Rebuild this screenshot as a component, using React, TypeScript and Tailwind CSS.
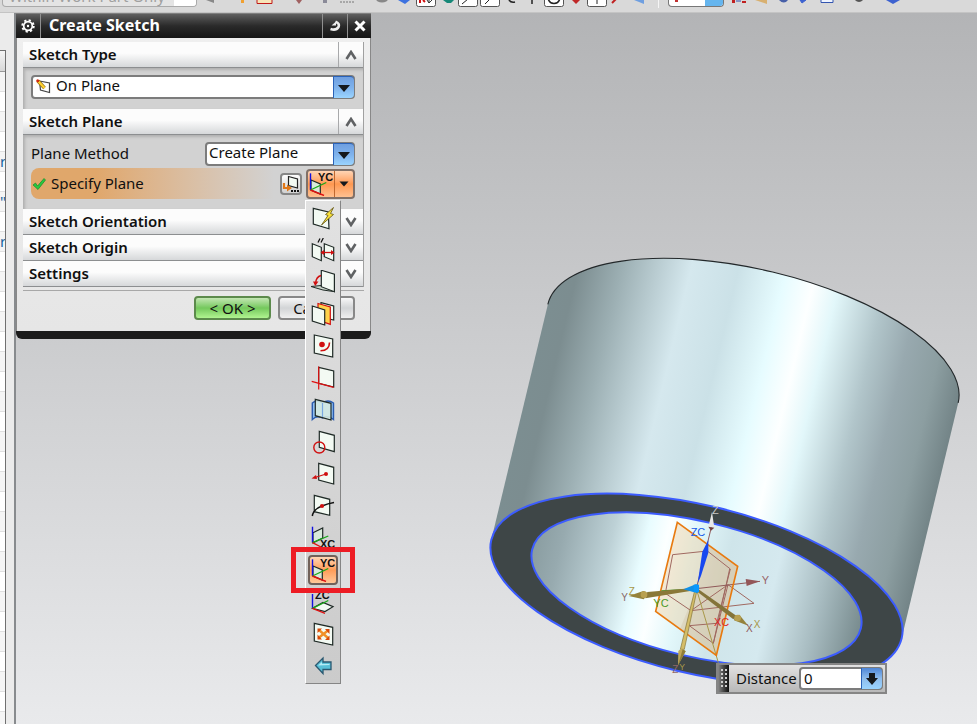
import React from 'react';

const ink = { stroke: '#1f2a26', strokeWidth: 1.2, fill: '#f3faf3' };

const Icon: React.FC<{ children: React.ReactNode }> = ({ children }) => (
  <svg viewBox="0 0 24 24" className="block h-6 w-6 shrink-0" aria-hidden="true">{children}</svg>
);

const Yc = () => (
  <Icon>
    <path d="M2 8L11.3 12V22L2 18Z" {...ink} fill="#d9eadb" />
    <path d="M1.5 1.3V18" stroke="#1010e0" strokeWidth="1.4" />
    <path d="M1.5 18L17.3 10.5" stroke="#18a818" strokeWidth="1.3" />
    <path d="M1.5 18L15 23.5" stroke="#e01010" strokeWidth="1.4" />
    <text x="9" y="9" fontSize="11" fontWeight="bold" fontFamily="Liberation Sans" fill="#111">YC</text>
  </Icon>
);

const planeTools = [
  { name: 'Inferred', icon: (
    <Icon>
      <path d="M2.3 2.3L17.3 6L18 22.7L2.3 18Z" {...ink} />
      <path d="M22.5 1.5L14.5 8.5L17 9.5L10.5 19L22.5 8.5L19.5 7.5L22.5 1.5Z" fill="#f7e03a" stroke="#6f6220" strokeWidth="0.9" />
    </Icon>
  ) },
  { name: 'At Distance', icon: (
    <Icon>
      <path d="M1.3 5.7L10.3 9.3V22.7L1.3 18.7Z" {...ink} />
      <path d="M13.3 5.7L22.7 9.3V22.7L13.3 18.7Z" {...ink} />
      <path d="M7 4.5L9 .5M10 4.5L12.3 0" stroke="#111" strokeWidth="1.3" />
      <path d="M11 14.5H22" stroke="#d01010" strokeWidth="1.3" />
      <path d="M9.5 14.5L13 12V17ZM23.5 14.5L20 12V17Z" fill="#d01010" />
    </Icon>
  ) },
  { name: 'At Angle', icon: (
    <Icon>
      <path d="M0 16.5L10.3 15.5L23.7 21.7L12 20Z" fill="#c9d6c9" stroke="#1f2a26" />
      <path d="M10.3 .3L23.4 4.3V21.7L10.3 16.7Z" {...ink} />
      <path d="M10 5.5Q5 7 4.7 13" fill="none" stroke="#d01010" strokeWidth="1.4" />
      <path d="M2 11.5H7.5L4.2 16Z" fill="#d01010" />
    </Icon>
  ) },
  { name: 'Bisector', icon: (
    <Icon>
      <path d="M10 .6L22.7 4V18L10 15Z" {...ink} />
      <path d="M7 1.5L19.3 5V22.3L7 18Z" fill="#ffd24a" stroke="#d01010" strokeWidth="1.2" />
      <path d="M1.3 4L13.7 8V23L1.3 19Z" {...ink} />
    </Icon>
  ) },
  { name: 'Curves and Points', icon: (
    <Icon>
      <path d="M3.3 1L21.7 5V23L3.3 19Z" {...ink} />
      <circle cx="11" cy="10.5" r="2.8" fill="#d01010" />
      <path d="M18.5 8.5Q18.5 16.5 9.5 16.8" fill="none" stroke="#d01010" strokeWidth="1.6" />
    </Icon>
  ) },
  { name: 'Two Lines', icon: (
    <Icon>
      <path d="M7.7 1.3L22.7 5V21L7.7 17.3Z" {...ink} />
      <path d="M7.7 .5V23.5M.7 15.3L22.7 21.3" stroke="#e01010" strokeWidth="1.2" />
    </Icon>
  ) },
  { name: 'Tangent', icon: (
    <Icon>
      <path d="M1.3 5Q6 1 11.5 5Q17 1 22.5 5V21.5Q17 17 11.5 20Q6 17 1.3 21.5Z" fill="#8fbdf0" stroke="#2a5cb0" strokeWidth="1.4" />
      <path d="M4.3 1.3L20 5.3V22L4.3 17.7Z" fill="#dcefe2" fillOpacity="0.85" stroke="#1f2a26" strokeWidth="1.2" />
      <path d="M11.5 5V19" stroke="#7aa8e0" strokeWidth="1.2" />
    </Icon>
  ) },
  { name: 'Through Object', icon: (
    <Icon>
      <path d="M8.3 1.3L23.3 5.3V21.7L8.3 17.3Z" {...ink} />
      <circle cx="8.3" cy="17.5" r="5.5" fill="none" stroke="#d01010" strokeWidth="1.4" />
    </Icon>
  ) },
  { name: 'Point and Direction', icon: (
    <Icon>
      <path d="M7.7 1.3L22.7 5.3V22L7.7 18Z" {...ink} />
      <circle cx="15" cy="12" r="2" fill="#d01010" />
      <path d="M15 12L4 15.5" stroke="#d01010" strokeWidth="1.3" />
      <path d="M.5 16.5L5 13L6 17Z" fill="#d01010" />
    </Icon>
  ) },
  { name: 'On Curve', icon: (
    <Icon>
      <path d="M3.3 1.3L18.7 5.3V21.3L3.3 17.7Z" {...ink} />
      <path d="M1.3 22Q2.5 15 11 12Q17 9.5 23 8.5" fill="none" stroke="#111" strokeWidth="1.5" />
      <circle cx="11" cy="12" r="2.1" fill="#d01010" />
    </Icon>
  ) },
  { name: 'YC-ZC Plane', icon: (
    <Icon>
      <path d="M2 6.7L11.7 2V12L2 16.7Z" {...ink} fill="#d9eadb" />
      <path d="M1.5 .7V16.7" stroke="#1010e0" strokeWidth="1.4" />
      <path d="M1.5 16.7L17.3 10" stroke="#18a818" strokeWidth="1.3" />
      <path d="M1.5 16.7L10 21" stroke="#e01010" strokeWidth="1.4" />
      <text x="9" y="21.5" fontSize="11" fontWeight="bold" fontFamily="Liberation Sans" fill="#111">XC</text>
    </Icon>
  ) },
  { name: 'XC-ZC Plane', icon: <Yc /> },
  { name: 'XC-YC Plane', icon: (
    <Icon>
      <path d="M1.5 18.3L12 12.5L22 16.7L14 21.5Z" {...ink} />
      <path d="M1.5 4V18.3" stroke="#1010e0" strokeWidth="1.4" />
      <path d="M1.5 18.3L17.3 10.5" stroke="#18a818" strokeWidth="1.3" />
      <path d="M1.5 18.3L14 23.3" stroke="#e01010" strokeWidth="1.4" />
      <text x="4" y="9" fontSize="11" fontWeight="bold" fontFamily="Liberation Sans" fill="#111">ZC</text>
    </Icon>
  ) },
  { name: 'View Plane', icon: (
    <Icon>
      <path d="M3.3 1.3L21.7 5.3V23L3.3 19Z" {...ink} />
      <path d="M8 8L17 16M17 8.5L8 15.5" stroke="#f09028" strokeWidth="2.4" />
      <path d="M6.5 6.5H11L6.5 11ZM18.5 7V12L14 7ZM6.5 17.5V12.5L11 17.5ZM18.5 18H14L18.5 13.5Z" fill="#d84808" />
    </Icon>
  ) },
  { name: 'Back', icon: (
    <Icon>
      <path d="M4.5 11.5L12 4V8H20V15.5H12V19.5Z" fill="#58c0d8" stroke="#2a5870" strokeWidth="1.3" />
      <path d="M7 11.5L11 8V10H18.5V11Z" fill="#b5ecf5" />
    </Icon>
  ) },
];

const DropArrow = () => (
  <span className="pointer-events-none absolute inset-y-[1px] right-[1px] flex w-[21px] items-center justify-center rounded-r-sm border-l border-t border-[#2a62b8] bg-linear-to-b from-[#6f9fe0] via-[#7fb2ec] to-[#9ad4ff]">
    <svg viewBox="0 0 12 8" className="h-[8px] w-[12px]" aria-hidden="true"><path d="M0 1H12L6 8Z" fill="#15181c" /></svg>
  </span>
);

const SectionHeader: React.FC<{ title: string; open?: boolean }> = ({ title, open }) => (
  <button type="button" aria-expanded={!!open} className="flex h-[26px] w-full items-stretch border-b border-[#8c8e90] bg-linear-to-b from-[#fcfcfc] from-45% to-[#d6d8da] text-left text-[15px] font-semibold leading-[24px]">
    <span className="flex-1 pl-[6px]">{title}</span>
    <span className="flex w-[25px] items-center justify-center border-l border-[#a8a9ab]">
      <svg viewBox="0 0 12 10" className="h-[10px] w-[12px]" aria-hidden="true">
        <path d={open ? 'M1.5 9L6 2L10.5 9' : 'M1.5 1L6 8L10.5 1'} fill="none" stroke="#606264" strokeWidth="2.6" />
      </svg>
    </span>
  </button>
);

const Tool: React.FC<{ name: string; framed?: boolean; children: React.ReactNode }> = ({ name, framed, children }) => (
  <button type="button" aria-label={name} className="h-[13px] w-[22px] shrink-0">
    <svg viewBox="0 0 22 13" className="block h-[13px] w-[22px]" aria-hidden="true">
      {framed && <rect x="1.5" y="-12" width="19" height="18.5" rx="2" fill="#fff" stroke="#555" />}
      {children}
    </svg>
  </button>
);

const Toolbar = () => (
  <header className="flex h-[13px] shrink-0 overflow-hidden border-b border-[#c4c4c4] bg-[#d9d9d9]">
    <div className="ml-[2px] flex h-[7px] w-[195px] shrink-0 items-end overflow-hidden rounded-b border-x border-b border-[#aaa] bg-[#e4e4e4]">
      <select aria-label="Selection scope" className="h-[20px] w-full appearance-none pl-[6px] text-[15px] leading-[20px] text-[#a0a0a0]">
        <option>Within Work Part Only</option>
      </select>
      <span className="h-[7px] w-[22px] shrink-0 bg-white" />
    </div>
    <div className="ml-[3px] flex">
      <Tool name="Chamfer"><path d="M6 0L14 3V0Z" fill="#888" /></Tool>
      <span className="w-[10px]" />
      <Tool name="Highlight"><path d="M9 0H12V3H9Z" fill="#f0a030" /></Tool>
      <Tool name="Select"><path d="M3 -5H18V3.5H3Z" fill="#f7e4b8" stroke="#c01818" /></Tool>
      <span className="w-[12px]" />
      <Tool name="Pin"><path d="M8 0L11 4L14 0Z" fill="#a06060" /></Tool>
      <span className="w-[4px]" />
      <Tool name="Box"><path d="M9 0H13V3H9Z" fill="#8a8a98" /></Tool>
      <Tool name="Region"><path d="M4 2H18" stroke="#777" strokeDasharray="2 1" /></Tool>
    </div>
    <div className="ml-[13px] flex">
      <Tool name="Sphere"><ellipse cx="11" cy="-1" rx="6" ry="3.5" fill="#888" /></Tool>
      <Tool name="Solid"><path d="M5 0L12 4L17 0Z" fill="#3d72e0" /></Tool>
      <Tool name="Snap points" framed><path d="M5 0V3M8 0L10 2" stroke="#d01010" strokeWidth="2" /><path d="M12 0L14 3L17 0M14 -1V3" fill="none" stroke="#333" /></Tool>
      <Tool name="Filter"><path d="M6 0H17L14 3H10Z" fill="#168878" /></Tool>
    </div>
    <div className="-ml-[2px] flex">
      <Tool name="End point" framed><path d="M5 4L11 -1" stroke="#222" /></Tool>
      <Tool name="Mid point" framed><path d="M6 4L11 -1" stroke="#222" /></Tool>
      <Tool name="Arc"><path d="M8 0Q10 3 14 2" fill="none" stroke="#222" strokeWidth="1.5" /></Tool>
    </div>
    <div className="-ml-[2px] flex">
      <Tool name="Intersection"><path d="M11 0V4" stroke="#222" strokeWidth="1.5" /></Tool>
      <Tool name="Center" framed><path d="M5 -2Q6 3.5 11 3.5T17 -2" fill="none" stroke="#222" strokeWidth="1.5" /></Tool>
      <Tool name="Quadrant"><path d="M7 0L11 4L15 0Z" fill="#c02828" /></Tool>
    </div>
    <div className="-ml-[1px] flex">
      <Tool name="Existing point" framed><path d="M11 -1V4" stroke="#222" /></Tool>
      <Tool name="On curve"><path d="M4 3L9 -2" stroke="#c02020" strokeWidth="2" /></Tool>
      <Tool name="On face"><path d="M4 0L14 4V0Z" fill="#6f9fe0" /></Tool>
    </div>
    <div className="ml-[1px] h-[8px] w-[6px] border-r border-[#f5f5f5]" />
    <div className="ml-[9px] flex h-[7px] w-[56px] shrink-0 justify-between overflow-hidden rounded-b border-x border-b border-[#777] bg-white">
      <span className="ml-[6px] h-[2px] w-[3px] bg-[#c03030]" />
      <span className="h-[7px] w-[18px] bg-[#65b5ee]" />
    </div>
    <div className="ml-[4px] flex">
      <Tool name="Points"><path d="M4 0H7V3H4ZM14 1H18V3H14Z" fill="#c02020" /><path d="M8 1H13" stroke="#3050b0" /></Tool>
      <Tool name="Layer"><path d="M5 0H17V4Z" fill="#d8b070" /></Tool>
      <Tool name="Render"><path d="M7 0Q12 5 16 0" fill="#4860a8" /></Tool>
      <Tool name="Shade"><path d="M6 0L8 3L12 0Z" fill="#3d62d0" stroke="#3d62d0" /></Tool>
      <Tool name="Window"><path d="M5 -5H17V2.5H5Z" fill="#eef4ff" stroke="#3355b0" /></Tool>
      <span className="w-[10px]" />
      <Tool name="View"><path d="M6 -1Q11 5 16 -1Z" fill="#555" /></Tool>
      <span className="w-[12px]" />
      <Tool name="Cube"><path d="M4 0L11 4L18 0Z" fill="#3d62d0" /></Tool>
    </div>
  </header>
);

const Model = () => (
  <svg viewBox="480 240 490 460" className="absolute left-[464px] top-[227px] h-[460px] w-[490px]" aria-label="Hollow cylinder">
    <defs>
      <linearGradient id="side" gradientUnits="userSpaceOnUse" x1="-211" x2="211" y1="0" y2="0">
        <stop offset="0" stopColor="#7c8e91" />
        <stop offset="0.05" stopColor="#7c8d90" />
        <stop offset="0.15" stopColor="#9cafb3" />
        <stop offset="0.31" stopColor="#d5e8ee" />
        <stop offset="0.42" stopColor="#cbe1e7" />
        <stop offset="0.53" stopColor="#e6fcff" />
        <stop offset="0.6" stopColor="#fdffff" />
        <stop offset="0.66" stopColor="#e2f7fa" />
        <stop offset="0.77" stopColor="#b1c5ca" />
        <stop offset="0.85" stopColor="#98a9af" />
        <stop offset="0.93" stopColor="#8c9ea1" />
        <stop offset="1" stopColor="#738487" />
      </linearGradient>
      <linearGradient id="bore" gradientUnits="userSpaceOnUse" x1="-169" x2="169" y1="0" y2="0">
        <stop offset="0" stopColor="#8a9da1" />
        <stop offset="0.08" stopColor="#97aaaf" />
        <stop offset="0.22" stopColor="#bdd1d6" />
        <stop offset="0.32" stopColor="#e8fcff" />
        <stop offset="0.38" stopColor="#fcffff" />
        <stop offset="0.46" stopColor="#e2f7fa" />
        <stop offset="0.57" stopColor="#cfe5ea" />
        <stop offset="0.72" stopColor="#d5e9ef" />
        <stop offset="0.86" stopColor="#a9bdc2" />
        <stop offset="1" stopColor="#788b8e" />
      </linearGradient>
    </defs>
    <g transform="translate(696.5 589) rotate(13.5)">
      <path d="M-211 0V-242A211 84 0 0 1 211 -242V0Z" fill="url(#side)" />
      <path d="M-211 -242A211 84 0 0 1 211 -242" fill="none" stroke="#23282a" strokeWidth="1.1" />
      <ellipse rx="211" ry="84" fill="#3e4647" stroke="#3c5cff" strokeWidth="2" />
      <ellipse rx="169" ry="67.5" fill="url(#bore)" stroke="#3c5cff" strokeWidth="2" />
    </g>

    {/* datum plane and coordinate axes */}
    <g transform="translate(600 490) scale(0.33333)" fill="none" fontFamily="Liberation Sans" fontSize="33">
      <path d="M232 97L413 229L349 496L167 364Z" fill="#f0c890" fillOpacity="0.38" />
      <path d="M322 160L413 229L349 496L240 416L290 296Z" fill="#b09060" fillOpacity="0.14" />
      <path d="M218 194L322 183L391 237L350 400L268 407L340 460L389 237M218 194L196 310L273 362L462 340L384 284M273 362L384 284L340 460" stroke="#a06860" strokeWidth="3" />
      <path d="M289 296L480 274M289 296L336 104" stroke="#905858" strokeWidth="3" />
      <path d="M289 296L355 518" stroke="#a89848" strokeWidth="3" />
      <path d="M232 97L413 229L349 496L167 364Z" stroke="#e87a10" strokeWidth="5" />
      <path d="M184 303L254 299" stroke="#3f9a30" strokeWidth="4" />
      <path d="M293 280L307 185L325 150V188L302 260Z" fill="#1848f0" />
      <path d="M437 267L480 274L440 288Z" fill="#935658" />
      <path d="M336 66L343 113L325 112Z" fill="#e8e8e8" />
      <path d="M325 110L343 113L333 122Z" fill="#704040" />
      <path d="M289 293L142 306L136 325L289 300Z" fill="#8a7838" />
      <path d="M86 318L130 303Q142 304 140 318L131 328Z" fill="#94823c" />
      <circle cx="132" cy="314" r="10" fill="#b8a050" />
      <path d="M289 293L410 378L400 388L285 300Z" fill="#84743a" />
      <path d="M445 407L402 391Q402 375 418 374Z" fill="#94823c" />
      <circle cx="413" cy="384" r="10" fill="#b8a050" />
      <path d="M285 298L241 478H253L291 300Z" fill="#d4bd68" stroke="#827238" strokeWidth="2" />
      <path d="M234 526L235 483Q246 471 257 484Z" fill="#c0a858" />
      <path d="M234 526L248 478L257 484Z" fill="#8f7d38" />
      <path d="M250 298L289 282L298 292L293 310Z" fill="#1090e8" />
      <path d="M281 284H297V306H281Z" fill="#0898ff" />
      <text x="272" y="137" fill="#1858e8">ZC</text>
      <text x="160" y="350" fill="#4c9a28">YC</text>
      <text x="342" y="409" fill="#e02828">XC</text>
      <text x="336" y="72" fill="#c8c8c8">Z</text>
      <text x="485" y="283" fill="#986468">Y</text>
      <text x="64" y="332" fill="#886868" fontSize="30">Y</text>
      <text x="86" y="316" fill="#a89848" fontSize="30">Z</text>
      <text x="461" y="414" fill="#a89848" fontSize="30">X</text>
      <text x="438" y="426" fill="#905858" fontSize="30">X</text>
      <text x="217" y="550" fill="#906868" fontSize="30">Z</text>
      <text x="238" y="540" fill="#a89848" fontSize="26">Y</text>
    </g>
  </svg>
);

const PlaneMenu = () => (
  <div className="absolute -left-[1px] top-[31px] z-20 flex w-[36px] flex-col border border-l-white border-t-white border-b-[#858585] border-r-[#858585] bg-linear-to-b from-[#e2e2e2] to-[#cbcbcb] py-[1px]">
    {planeTools.map((tool) => {
      const active = tool.name === 'XC-ZC Plane';
      return (
        <div key={tool.name} className="relative flex h-8 items-center justify-center">
          <button
            type="button"
            aria-label={tool.name}
            className={active
              ? 'flex h-[30px] w-[30px] items-center justify-center rounded border-2 border-[#70615a] bg-linear-to-b from-[#ffd6b4] via-[#ff9c58] to-[#ffc898]'
              : 'flex h-[30px] w-[30px] items-center justify-center'}
          >
            {tool.icon}
          </button>
          {active && <span className="pointer-events-none absolute -inset-x-[15px] -inset-y-[7px] z-10 border-[5px] border-[#ed1c24]" />}
        </div>
      );
    })}
  </div>
);

const CreateSketchDialog = () => (
  <section aria-label="Create Sketch" className="absolute left-0 top-0 z-10 w-[355px] overflow-visible rounded-b-md bg-[#1b1b1b] pb-[8px]">
    <div className="flex h-[25px] items-stretch border-t border-[#808080] bg-linear-to-b from-[#606060] via-[#2a2a2a] to-[#161616] text-white">
      <button type="button" aria-label="Options" className="flex w-[25px] items-center justify-center border-r border-[#909090]">
        <svg viewBox="0 0 14 14" className="h-[14px] w-[14px]" aria-hidden="true">
          <circle cx="7" cy="7" r="5.7" fill="none" stroke="#fff" strokeWidth="2" strokeDasharray="2.2 2.27" />
          <circle cx="7" cy="7" r="4.3" fill="none" stroke="#fff" strokeWidth="1.7" />
          <circle cx="7" cy="7" r="1.2" fill="#fff" />
        </svg>
      </button>
      <h1 className="flex-1 pl-[8px] text-[16px] font-bold leading-[22px]">Create Sketch</h1>
      <button type="button" aria-label="Reset" className="flex w-[25px] items-center justify-center border-l border-[#909090]">
        <svg viewBox="0 0 12 12" className="h-[12px] w-[12px]" aria-hidden="true"><path d="M6.5 1.8Q11 3.5 9.5 7Q7 11 1.5 9" fill="none" stroke="#eee" strokeWidth="2.6" /><path d="M2.5 5.5H7V1.5Z" fill="#eee" /></svg>
      </button>
      <button type="button" aria-label="Close" className="flex w-[24px] items-center justify-center border-l border-[#909090]">
        <svg viewBox="0 0 12 12" className="h-[12px] w-[12px]" aria-hidden="true"><path d="M1.5 1.5L10.5 10.5M10.5 1.5L1.5 10.5" stroke="#fff" strokeWidth="3" /></svg>
      </button>
    </div>

    <div className="border-x border-[#888] bg-linear-to-b from-[#efefef] to-[#e6e6e6] px-[6px] pb-[11px] pt-[4px]">
      <div className="border-r border-[#a0a0a0]">
        <SectionHeader title="Sketch Type" open />
        <div className="bg-[#d2d2d2] px-[8px] pb-[10px] pt-[7px] shadow-[inset_2px_2px_3px_#b0b0b0]">
          <div className="relative">
            <select aria-label="Sketch Type" className="block h-[24px] w-full appearance-none rounded border-2 border-[#7c7c7c] bg-white pb-[4px] pl-[23px] text-[15px] leading-[16px]">
              <option>On Plane</option>
            </select>
            <svg viewBox="0 0 16 16" className="pointer-events-none absolute left-[5px] top-[4px] h-[16px] w-[16px]" aria-hidden="true">
              <path d="M3.5 2L13.5 4V13.5L4.5 11Z" fill="#fff" stroke="#444" strokeWidth="1.2" />
              <path d="M2 2L8.5 9" stroke="#8a6a10" strokeWidth="3.5" />
              <path d="M2 2L8.5 9" stroke="#ffd030" strokeWidth="2.3" />
              <circle cx="1.7" cy="1.8" r="1.5" fill="#d02810" />
            </svg>
            <DropArrow />
          </div>
        </div>

        <SectionHeader title="Sketch Plane" open />
        <div className="bg-[#d2d2d2] px-[8px] pb-[10px] pt-[7px] shadow-[inset_2px_2px_3px_#b0b0b0]">
          <div className="flex h-[24px] items-center justify-between">
            <label htmlFor="plane-method" className="pb-[2px] text-[15px] leading-[22px]">Plane Method</label>
            <div className="relative w-[150px]">
              <select id="plane-method" className="block h-[24px] w-full appearance-none rounded border-2 border-[#7c7c7c] bg-white pb-[4px] pl-[2px] text-[15px] leading-[16px]">
                <option>Create Plane</option>
              </select>
              <DropArrow />
            </div>
          </div>
          <div className="mt-[2px] flex h-[31px] items-center rounded-lg bg-linear-to-r from-[#e0a76b] from-20% to-[#d2d2d2] to-75%">
            <svg viewBox="0 0 14 12" className="ml-[1px] h-[12px] w-[14px]" aria-hidden="true"><path d="M1 7L3.5 5L5.5 8L12 .5L13.5 2L6 11.5Z" fill="#28c840" stroke="#188a28" strokeWidth="0.7" /></svg>
            <span className="flex-1 pb-[2px] pl-[5px] text-[15px] leading-[28px]">Specify Plane</span>
            <button type="button" aria-label="Plane Dialog" className="mr-[4px] flex h-[22px] w-[22px] items-center justify-center rounded border-2 border-[#868686] bg-linear-to-b from-[#fdfdfd] to-[#d0d0d0]">
              <svg viewBox="0 0 18 18" className="h-[18px] w-[18px] shrink-0" aria-hidden="true">
                <path d="M6.5 1.5L15.5 4V13L6.5 10.5Z" fill="#f3faf3" stroke="#222" strokeWidth="1.2" />
                <path d="M2 8V13H6" fill="none" stroke="#e07818" strokeWidth="2.2" />
                <path d="M5 9.5L10 13L5 16.5Z" fill="#e07818" />
                <path d="M9 16H11M12 16H14M15 16H17" stroke="#111" strokeWidth="2" />
              </svg>
            </button>
            <div className="relative flex h-[30px] w-[49px] items-stretch rounded border-2 border-[#807068] bg-linear-to-b from-[#ffd4b4] via-[#ff9850] to-[#ffc090]">
              <button type="button" aria-label="XC-ZC Plane" className="flex w-[26px] items-center justify-center"><Yc /></button>
              <button type="button" aria-label="Plane types" className="flex flex-1 items-center justify-center border-l border-[#c06830]">
                <svg viewBox="0 0 10 6" className="h-[6px] w-[10px]" aria-hidden="true"><path d="M.5 .5H9.5L5 5.5Z" fill="#15181c" /></svg>
              </button>
              <div className="absolute -left-[2px] -top-[2px]"><PlaneMenu /></div>
            </div>
          </div>
        </div>

        <SectionHeader title="Sketch Orientation" />
        <SectionHeader title="Sketch Origin" />
        <SectionHeader title="Settings" />
      </div>
      <div className="mt-[3px] border-t border-[#a8a8a8]" />
      <div className="mr-[9px] mt-[5px] flex justify-end gap-[7px] text-[15px] leading-[20px]">
        <button type="button" className="h-[24px] w-[77px] rounded border-2 border-[#5c8a4c] bg-linear-to-b from-[#c2e6b2] via-[#74c85c] to-[#b0f490]">&lt; OK &gt;</button>
        <button type="button" className="h-[24px] w-[77px] rounded border-2 border-[#888] bg-linear-to-b from-[#f8f8f8] via-[#d2d4d6] to-[#f0f0f0]">Cancel</button>
      </div>
    </div>
  </section>
);

const Navigator = () => {
  const rows = ['', '', '', '', 'r', '', '"', '', 'r', ...Array(25).fill('')];
  return (
    <aside className="w-4 shrink-0 overflow-hidden border-r-2 border-[#888b8e] bg-[#ebebeb] pt-[37px]">
      <div className="w-[6px] border-r border-t border-[#707070]">
        <div className="h-[21px] border-b border-[#999] bg-linear-to-b from-[#f5f5f5] to-[#d8d8d8]" />
        {rows.map((mark, index) => (
          <div key={index} className="h-[20px] overflow-hidden border-b border-[#e0e0e0] bg-white text-[15px] leading-[18px] text-[#1a66a0] even:bg-[#f5f5f5]">{mark}</div>
        ))}
      </div>
    </aside>
  );
};

const App: React.FC = () => (
  <div className="flex h-screen flex-col overflow-hidden bg-[#e8e9eb] font-['Noto_Sans',sans-serif] text-[#101010]">
    <Toolbar />
    <div className="flex min-h-0 flex-1">
      <Navigator />
      <main className="relative flex-1 bg-linear-to-b from-[#b3b4b6] to-[#e9eaec]">
        <Model />
        <CreateSketchDialog />
        <div className="absolute left-[700px] top-[650px] flex h-[31px] w-[171px] items-center border-2 border-[#858585] bg-linear-to-b from-[#e2e2e2] to-[#b8b8b8]">
          <span className="flex h-full w-[11px] items-center justify-center bg-linear-to-r from-[#888] to-[#111]">
            <svg viewBox="0 0 8 20" className="h-[20px] w-[8px]" aria-hidden="true">
              <path d="M2 0V20M6 0V20" stroke="#d0d0d0" strokeWidth="2" strokeDasharray="2 2" />
            </svg>
          </span>
          <label htmlFor="distance" className="flex-1 pb-[2px] pl-[7px] text-[15px] leading-[24px]">Distance</label>
          <div className="relative mr-[2px] w-[84px]">
            <input id="distance" type="text" defaultValue="0" className="block h-[23px] w-full rounded border-2 border-[#7c7c7c] bg-white pb-[2px] pl-[3px] text-[15px] leading-[17px]" />
            <button type="button" aria-label="Distance options" className="absolute inset-y-[1px] right-[1px] flex w-[21px] items-center justify-center rounded-r-sm border-l border-[#2a62b8] bg-linear-to-b from-[#4f86d6] via-[#8ebcec] to-[#9ad4ff]">
              <svg viewBox="0 0 14 14" className="h-[14px] w-[14px]" aria-hidden="true"><path d="M4 1H10V6H13L7 13L1 6H4Z" fill="#15181c" /></svg>
            </button>
          </div>
        </div>
      </main>
    </div>
  </div>
);

export default App;
